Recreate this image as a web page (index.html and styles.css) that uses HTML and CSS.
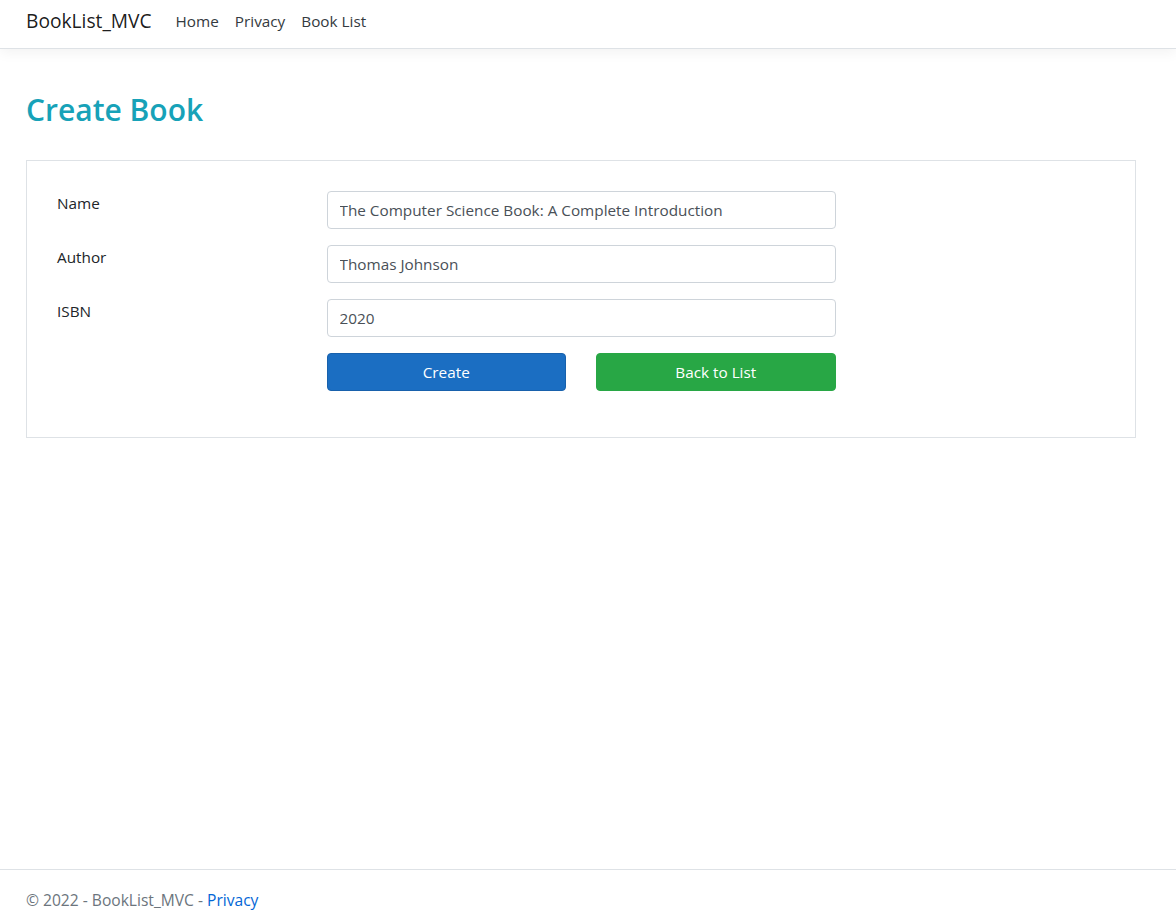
FILE: index.html
```html
<!DOCTYPE html>
<html lang="en">
<head>
<meta charset="utf-8">
<title>Create Book - BookList_MVC</title>
<link rel="stylesheet" href="styles.css">
</head>
<body>
<header class="navbar">
  <div class="container nav-inner">
    <a class="brand" href="#">BookList_MVC</a>
    <nav class="nav-links">
      <a class="nav-link" href="#">Home</a>
      <a class="nav-link" href="#">Privacy</a>
      <a class="nav-link" href="#">Book List</a>
    </nav>
  </div>
</header>
<main class="container main">
  <h2 class="title">Create Book</h2>
  <form class="form-box">
    <div class="form-row">
      <label class="label" for="name">Name</label>
      <div class="field"><input id="name" class="input" type="text" value="The Computer Science Book: A Complete Introduction"></div>
    </div>
    <div class="form-row">
      <label class="label" for="author">Author</label>
      <div class="field"><input id="author" class="input" type="text" value="Thomas Johnson"></div>
    </div>
    <div class="form-row">
      <label class="label" for="isbn">ISBN</label>
      <div class="field"><input id="isbn" class="input" type="text" value="2020"></div>
    </div>
    <div class="form-row">
      <div class="label"></div>
      <div class="field buttons">
        <button type="button" class="btn btn-primary">Create</button>
        <a href="#" class="btn btn-success">Back to List</a>
      </div>
    </div>
  </form>
</main>
<footer class="footer">
  <div class="container">&copy; 2022 - BookList_MVC - <a class="footer-link" href="#">Privacy</a></div>
</footer>
</body>
</html>
```

FILE: styles.css
```css
* { box-sizing: border-box; }
html, body { margin: 0; padding: 0; }
body {
  font-family: "Open Sans", "Noto Sans", "Liberation Sans", sans-serif;
  font-size: 15.3px;
  line-height: 24px;
  color: #212529;
  background: #fff;
  min-height: 922px;
  display: flex;
  flex-direction: column;
}
.container {
  width: 1136px;
  padding-left: 26px;
}
.navbar {
  height: 49px;
  border-bottom: 1px solid #dee2e6;
  box-shadow: 0 4px 12px rgba(0,0,0,0.05);
  display: flex;
  align-items: center;
  padding-bottom: 7px;
}
.nav-inner {
  display: flex;
  align-items: center;
}
.brand {
  font-size: 19.2px;
  color: rgba(0,0,0,0.9);
  text-decoration: none;
  margin-right: 16px;
  line-height: 30px;
}
.nav-links { display: flex; }
.nav-link {
  color: #343a40;
  text-decoration: none;
  padding: 0 8px;
}
.main {
  flex: 1;
  padding-top: 42px;
}
.title {
  margin: 0 0 31px 0;
  font-size: 30px;
  font-weight: 600;
  line-height: 38px;
  color: #17a2b8;
}
.form-box {
  width: 1110px;
  border: 1px solid #dee2e6;
  padding: 30px 30px 30px 30px;
}
.form-row {
  display: flex;
  margin-bottom: 16px;
}
.label {
  width: 269.5px;
  flex: none;
}
.field {
  width: 509px;
  flex: none;
}
.input {
  display: block;
  width: 100%;
  height: 38px;
  padding: 6px 12px;
  font: inherit;
  color: #495057;
  border: 1px solid #ced4da;
  border-radius: 4px;
  background: #fff;
}
.buttons {
  display: flex;
  gap: 30px;
}
.btn {
  flex: none;
  width: 239.5px;
  height: 38px;
  padding: 0;
  display: flex;
  align-items: center;
  justify-content: center;
  font: inherit;
  color: #fff;
  border-radius: 4px;
  border: 1px solid transparent;
  text-decoration: none;
  cursor: pointer;
}
.btn-primary { background: #1b6ec2; border-color: #1861ac; }
.btn-success { background: #28a745; border-color: #28a745; }
.footer {
  height: 53px;
  border-top: 1px solid #dee2e6;
  color: #6c757d;
  font-size: 15.6px;
  line-height: 60px;
  overflow: hidden;
}
.footer-link { color: #0366d6; text-decoration: none; }
```
